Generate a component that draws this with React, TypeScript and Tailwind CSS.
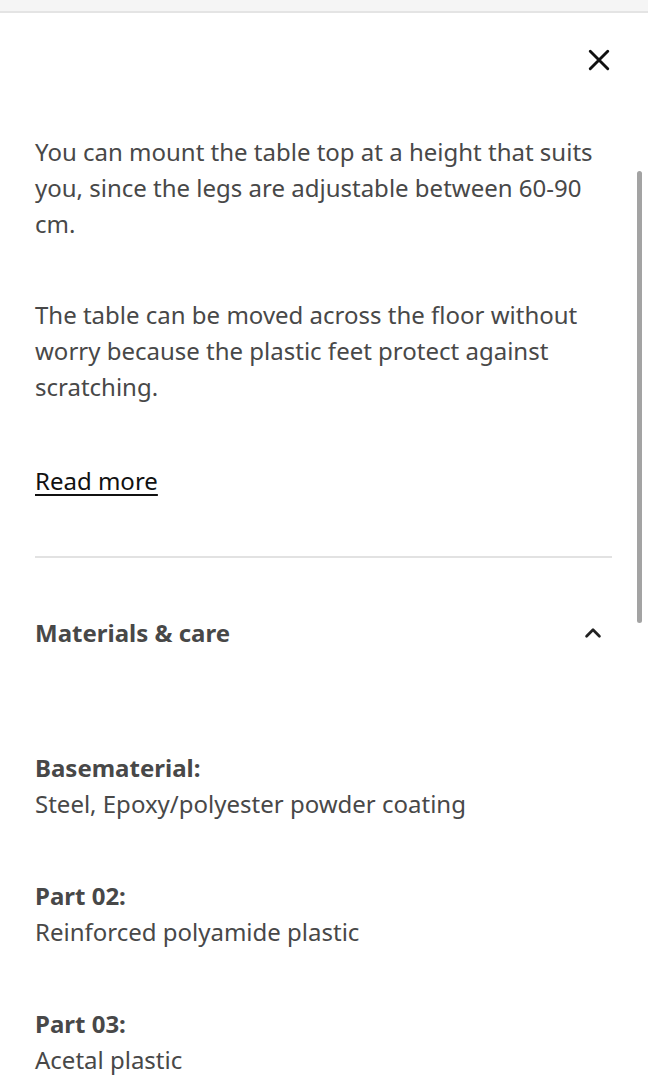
export default function App() {
  const materials = [
    { label: "Basematerial:", value: "Steel, Epoxy/polyester powder coating" },
    { label: "Part 02:", value: "Reinforced polyamide plastic" },
    { label: "Part 03:", value: "Acetal plastic" },
  ];

  return (
    <div className="relative h-[1080px] w-[648px] overflow-hidden bg-white font-['Noto_Sans',sans-serif] text-[#484848]">
      {/* top strip */}
      <div className="h-[13px] border-b-2 border-[#e4e4e4] bg-[#f5f5f5]" />

      {/* close */}
      <div className="flex justify-end pr-[35px] pt-[33px]">
        <svg width="28" height="28" viewBox="0 0 24 24" fill="none" stroke="#111" strokeWidth="2.5" strokeLinecap="round">
          <path d="M4.5 4.5l15 15M19.5 4.5l-15 15" />
        </svg>
      </div>

      <div className="pl-[35px] pr-[36px]">
        <p className="mt-[60px] text-[24px] leading-[36px]">
          You can mount the table top at a height that suits you, since the legs are adjustable between 60-90 cm.
        </p>
        <p className="mt-[55px] text-[24px] leading-[36px]">
          The table can be moved across the floor without worry because the plastic feet protect against scratching.
        </p>
        <a className="mt-[58px] block w-fit text-[24px] leading-[36px] text-[#111] underline decoration-[1.5px] underline-offset-[4px]">
          Read more
        </a>

        <div className="mt-[57px] h-[2px] bg-[#e2e2e2]" />

        <div className="mt-[57px] flex items-center justify-between">
          <span className="text-[24px] font-bold leading-[36px]">Materials &amp; care</span>
          <svg className="mr-[8px]" width="22" height="22" viewBox="0 0 24 24" fill="none" stroke="#222" strokeWidth="3" strokeLinecap="round" strokeLinejoin="round">
            <path d="M5 15.5l7-7 7 7" />
          </svg>
        </div>

        <div className="mt-[99px] flex flex-col gap-[56px]">
          {materials.map((m) => (
            <div key={m.label} className="text-[24px] leading-[36px]">
              <div className="font-bold">{m.label}</div>
              <div>{m.value}</div>
            </div>
          ))}
        </div>
      </div>

      {/* scrollbar */}
      <div className="absolute left-[637px] top-[171px] h-[452px] w-[5px] rounded-full bg-[#a3a3a3]" />
    </div>
  );
}
